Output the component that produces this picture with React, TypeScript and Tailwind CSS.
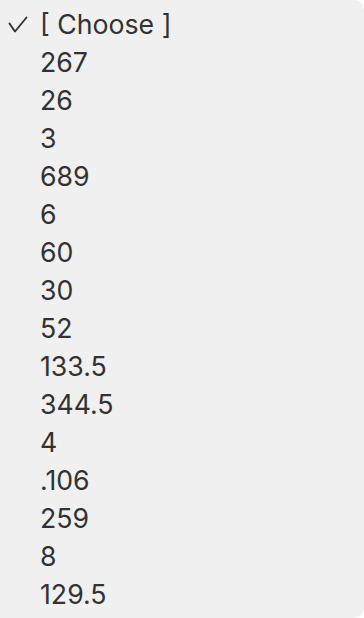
import React from "react";

const items = ["267","26","3","689","6","60","30","52","133.5","344.5","4",".106","259","8","129.5"];

export default function App() {
  return (
    <div className="w-[364px] h-[618px] overflow-hidden bg-[#f0f0f0] rounded-r-[10px] pt-[5px]" style={{fontFamily: "Inter, 'Noto Sans', sans-serif"}}>
      <ul className="flex flex-col text-[26.7px] text-[#323232] leading-[38px]">
        <li className="flex items-center h-[38px]">
          <span className="w-[40px] h-[38px] relative shrink-0">
            <svg className="absolute left-[7px] top-[11px]" width="22" height="19" viewBox="0 0 22 19" fill="none">
              <path d="M2.5 7.5 L8 15.5 L19.5 1.5" stroke="#333" strokeWidth="1.9" strokeLinecap="round" strokeLinejoin="round" />
            </svg>
          </span>
          <span>[ Choose ]</span>
        </li>
        {items.map((v) => (
          <li key={v} className="flex items-center h-[38px] pl-[40px]">{v}</li>
        ))}
      </ul>
    </div>
  );
}
